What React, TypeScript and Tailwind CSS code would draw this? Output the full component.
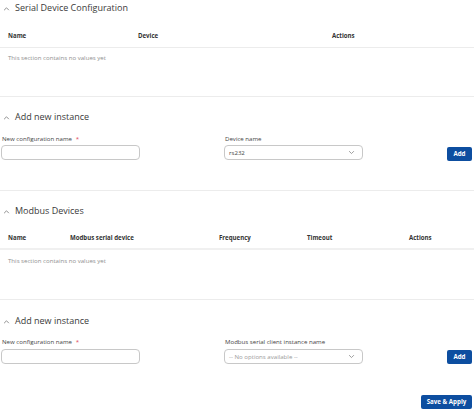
import React from "react";

const Chevron = ({ className = "" }: { className?: string }) => (
  <svg viewBox="0 0 10 6" className={className} fill="none" stroke="currentColor" strokeWidth="1.2" strokeLinecap="round" strokeLinejoin="round">
    <path d="M2 5 L5 2 L8 5" />
  </svg>
);

const Down = () => (
  <svg viewBox="0 0 10 6" className="w-[7px] h-[5px] text-[#8a8a8a]" fill="none" stroke="currentColor" strokeWidth="1.2" strokeLinecap="round" strokeLinejoin="round">
    <path d="M2 1.5 L5 4.5 L8 1.5" />
  </svg>
);

const Title = ({ children }: { children: React.ReactNode }) => (
  <div className="flex items-center h-[14px]">
    <Chevron className="w-[7px] h-[5px] ml-[3px] mr-[5px] text-[#7a7a7a]" />
    <span className="text-[9px] leading-[14px] text-[#3a3a3a]">{children}</span>
  </div>
);

const Empty = ({ cls }: { cls: string }) => (
  <div className={`${cls} border-b border-[#ececec] pl-[8px] text-[6.1px] leading-[10px] text-[#8f8f8f]`}>
    This section contains no values yet
  </div>
);

const AddBtn = () => (
  <div className="ml-auto mr-[2px] mt-[13px] w-[25px] h-[14px] rounded-[2px] bg-[#0d4ea0] flex items-center justify-center text-[6.2px] font-bold text-white">
    Add
  </div>
);

export default function App() {
  return (
    <div className="w-[474px] h-[410px] pt-[1px] bg-white overflow-hidden flex flex-col" style={{ fontFamily: "'Open Sans', sans-serif" }}>
      {/* Section 1 */}
      <Title>Serial Device Configuration</Title>
      <div className="mt-[10px] h-[23px] border-b border-[#ececec] pl-[8px] grid grid-cols-[130px_194px_1fr] items-center text-[6.1px] font-bold text-[#333]">
        <span>Name</span>
        <span>Device</span>
        <span>Actions</span>
      </div>
      <Empty cls="h-[49px] pt-[5px]" />

      {/* Section 2 */}
      <div className="h-[94px] pt-[13px] border-b border-[#ececec] flex flex-col">
        <Title>Add new instance</Title>
        <div className="mt-[10px] flex items-start">
          <div className="ml-[1px] w-[139px]">
            <div className="pl-[1px] h-[10px] text-[6.1px] leading-[10px] text-[#444]">
              New configuration name <span className="text-[#e0455a] ml-[2px]">*</span>
            </div>
            <div className="mt-[1px] h-[15px] rounded-[4px] border border-[#c8c8c8] bg-white" />
          </div>
          <div className="ml-[84px] w-[139px]">
            <div className="pl-[1px] h-[10px] text-[6.1px] leading-[10px] text-[#444]">Device name</div>
            <div className="mt-[1px] h-[15px] rounded-[4px] border border-[#c8c8c8] bg-white flex items-center justify-between pl-[4px] pr-[7px]">
              <span className="text-[6.1px] text-[#444]">rs232</span>
              <Down />
            </div>
          </div>
          <AddBtn />
        </div>
      </div>

      {/* Section 3 */}
      <div className="mt-[13px]">
        <Title>Modbus Devices</Title>
      </div>
      <div className="mt-[9px] h-[23px] border-b-2 border-[#f0f0f0] pl-[8px] grid grid-cols-[62px_149px_88px_102px_1fr] items-center text-[6.1px] font-bold text-[#333]">
        <span>Name</span>
        <span>Modbus serial device</span>
        <span>Frequency</span>
        <span>Timeout</span>
        <span>Actions</span>
      </div>
      <Empty cls="h-[50px] pt-[6px]" />

      {/* Section 4 */}
      <div className="mt-[14px]">
        <Title>Add new instance</Title>
      </div>
      <div className="mt-[9px] flex items-start">
        <div className="ml-[1px] w-[139px]">
          <div className="pl-[1px] h-[10px] text-[6.1px] leading-[10px] text-[#444]">
            New configuration name <span className="text-[#e0455a] ml-[2px]">*</span>
          </div>
          <div className="mt-[2px] h-[15px] rounded-[4px] border border-[#c8c8c8] bg-white" />
        </div>
        <div className="ml-[84px] w-[139px]">
          <div className="pl-[1px] h-[10px] text-[6.1px] leading-[10px] text-[#444]">Modbus serial client instance name</div>
          <div className="mt-[2px] h-[15px] rounded-[4px] border border-[#c8c8c8] bg-white flex items-center justify-between pl-[4px] pr-[7px]">
            <span className="text-[6.1px] text-[#9a9a9a]">-- No options available --</span>
            <Down />
          </div>
        </div>
        <AddBtn />
      </div>
      <div className="mt-[31px] flex justify-end">
        <div className="mr-[2px] w-[51px] h-[14px] rounded-[2px] bg-[#0d4ea0] flex items-center justify-center text-[6.2px] font-bold text-white">
          Save &amp; Apply
        </div>
      </div>
    </div>
  );
}
